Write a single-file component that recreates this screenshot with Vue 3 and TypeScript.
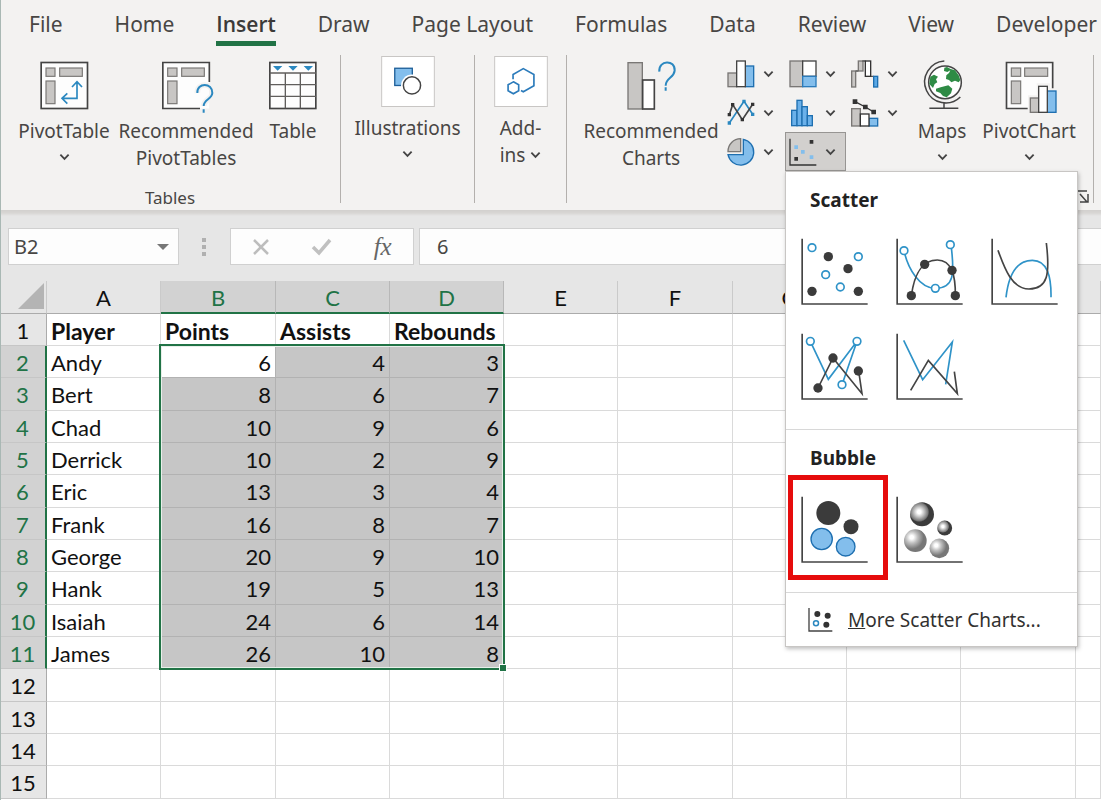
<script setup lang="ts">
import { ref } from 'vue'

interface Player {
  name: string
  points: number
  assists: number
  rebounds: number
}

const tabs = ['File', 'Home', 'Insert', 'Draw', 'Page Layout', 'Formulas', 'Data', 'Review', 'View', 'Developer']
const activeTab = ref('Insert')

const columns = ['A', 'B', 'C', 'D', 'E', 'F', 'G', 'H', 'I', '']
const selectedColumns = ['B', 'C', 'D']
const fields = ['Player', 'Points', 'Assists', 'Rebounds']

const players: Player[] = [
  { name: 'Andy', points: 6, assists: 4, rebounds: 3 },
  { name: 'Bert', points: 8, assists: 6, rebounds: 7 },
  { name: 'Chad', points: 10, assists: 9, rebounds: 6 },
  { name: 'Derrick', points: 10, assists: 2, rebounds: 9 },
  { name: 'Eric', points: 13, assists: 3, rebounds: 4 },
  { name: 'Frank', points: 16, assists: 8, rebounds: 7 },
  { name: 'George', points: 20, assists: 9, rebounds: 10 },
  { name: 'Hank', points: 19, assists: 5, rebounds: 13 },
  { name: 'Isaiah', points: 24, assists: 6, rebounds: 14 },
  { name: 'James', points: 26, assists: 10, rebounds: 8 },
]

const rows: (string | number)[][] = Array.from({ length: 15 }, (_, r) => {
  const p = players[r - 1]
  const filled: (string | number)[] = r === 0 ? fields : p ? [p.name, p.points, p.assists, p.rebounds] : []
  return columns.map((_, c) => filled[c] ?? '')
})

const isSelectedRow = (r: number) => r >= 1 && r <= players.length
const isSelectedCell = (r: number, c: number) => isSelectedRow(r) && c >= 1 && c <= 3

const cellName = ref('B2')
const formula = ref('6')
</script>

<template>
  <div class="excel">
    <nav class="tabs" aria-label="Ribbon tabs">
      <button
        v-for="tab in tabs"
        :key="tab"
        type="button"
        class="tab"
        :class="{ active: tab === activeTab }"
        @click="activeTab = tab"
      >{{ tab }}</button>
    </nav>

    <section class="ribbon" aria-label="Insert">
      <div class="group tables">
        <div class="tools">
          <button type="button" class="tool narrow">
            <svg class="big" viewBox="114 183 156 150">
              <rect x="123.500" y="187.500" width="139" height="138" fill="#fdfdfd" stroke="#444" stroke-width="5" />
              <g fill="#c8c6c4" stroke="#797775" stroke-width="3.500">
                <rect x="138" y="204" width="27" height="25" /><rect x="179" y="204" width="68" height="25" /><rect x="138" y="243" width="27" height="68" />
              </g>
              <path d="M231 246V295H187M216 261L231 245L246 261M202 280L186 295L202 311" fill="none" stroke="#2b88c0" stroke-width="5" />
            </svg>
            <span>PivotTable</span>
            <svg class="chevron" viewBox="0 0 12 8"><path d="M1.500 1.500L6 6L10.500 1.500" /></svg>
          </button>
          <button type="button" class="tool wide">
            <svg class="big" viewBox="480 183 156 150">
              <rect x="488.500" y="187.500" width="139" height="138" fill="#fdfdfd" />
              <path d="M628 246V187.500H488.500V325.500H600" fill="none" stroke="#444" stroke-width="5" />
              <g fill="#c8c6c4" stroke="#797775" stroke-width="3.500">
                <rect x="503" y="204" width="28" height="25" /><rect x="545" y="204" width="68" height="25" /><rect x="503" y="243" width="28" height="68" />
              </g>
              <path d="M592 279C590 247 638 247 637 279C636 298 611 298 611 318M611 327V338" fill="none" stroke="#f3f2f1" stroke-width="17" />
              <path d="M592 279C590 247 638 247 637 279C636 298 611 298 611 318M611 328V338" fill="none" stroke="#2b88c0" stroke-width="6" />
            </svg>
            <span>Recommended<br>PivotTables</span>
          </button>
          <button type="button" class="tool slim">
            <svg class="big" viewBox="801 183 156 150">
              <rect x="809.500" y="187.500" width="138" height="138" fill="#fdfdfd" stroke="#444" stroke-width="5" />
              <path d="M809 219H948M809 254H948M809 289H948M856 219V325M901 219V325" stroke="#605e5c" stroke-width="4" />
              <path d="M819 198H847L833 212ZM865 198H893L879 212ZM911 198H939L925 212Z" fill="#2b88c0" />
            </svg>
            <span>Table</span>
          </button>
        </div>
        <div class="caption">Tables</div>
      </div>
      <div class="divider"></div>

      <div class="group illustrations">
        <button type="button" class="tool boxed">
          <svg class="frame" viewBox="153 168 162 154">
            <rect x="154.500" y="169.500" width="159" height="151" fill="#fff" stroke="#c8c6c4" stroke-width="3" />
            <rect x="194" y="205" width="53" height="52" fill="#83beec" stroke="#1e5f99" stroke-width="4" />
            <circle cx="246" cy="257" r="33" fill="#fff" />
            <circle cx="246" cy="257" r="26" fill="#fff" stroke="#444" stroke-width="4.500" />
          </svg>
          <span>Illustrations</span>
          <svg class="chevron" viewBox="0 0 12 8"><path d="M1.500 1.500L6 6L10.500 1.500" /></svg>
        </button>
      </div>
      <div class="divider"></div>

      <div class="group addins">
        <button type="button" class="tool boxed">
          <svg class="frame" viewBox="491 168 162 154">
            <rect x="492.500" y="169.500" width="159" height="151" fill="#fff" stroke="#c8c6c4" stroke-width="3" />
            <path d="M548 238V224L579 206L611 224V258L579 276L572 272" fill="none" stroke="#2b7bbb" stroke-width="5" />
            <path d="M549 246L565 255V273L549 282L533 273V255Z" fill="none" stroke="#2b7bbb" stroke-width="5" />
          </svg>
          <span>Add-<br>ins <svg class="chevron inline" viewBox="0 0 12 8"><path d="M1.500 1.500L6 6L10.500 1.500" /></svg></span>
        </button>
      </div>
      <div class="divider"></div>

      <div class="group charts">
        <div class="tools">
          <button type="button" class="tool wide">
            <svg class="big" viewBox="165 63 156 150">
              <rect x="174" y="68" width="43" height="139" fill="#c8c6c4" stroke="#797775" stroke-width="4" />
              <rect x="218" y="120" width="35" height="87" fill="#fff" stroke="#444" stroke-width="5" />
              <path d="M268 95C265 59 316 58 314 92C312 114 287 114 287 137M287 142V152" fill="none" stroke="#2b88c0" stroke-width="6" />
            </svg>
            <span>Recommended<br>Charts</span>
          </button>

          <div class="chart-kinds">
            <button type="button" class="kind" aria-label="Column chart">
              <svg class="small" viewBox="473 55 84 84">
                <g stroke-width="4">
                  <rect x="476" y="94" width="26" height="41" fill="#c8c6c4" stroke="#797775" />
                  <rect x="528" y="73" width="25" height="62" fill="#83beec" stroke="#1e6fb0" />
                  <rect x="502" y="58" width="26" height="77" fill="#fff" stroke="#444" />
                </g>
              </svg>
              <svg class="chevron" viewBox="0 0 12 8"><path d="M1.500 1.500L6 6L10.500 1.500" /></svg>
            </button>
            <button type="button" class="kind" aria-label="Hierarchy chart">
              <svg class="small" viewBox="658 55 84 84">
                <g stroke-width="4">
                  <rect x="661" y="58" width="38" height="77" fill="#c8c6c4" stroke="#797775" />
                  <rect x="699" y="58" width="40" height="46" fill="#fff" stroke="#444" />
                  <rect x="699" y="104" width="40" height="31" fill="#83beec" stroke="#2b7bbb" />
                </g>
              </svg>
              <svg class="chevron" viewBox="0 0 12 8"><path d="M1.500 1.500L6 6L10.500 1.500" /></svg>
            </button>
            <button type="button" class="kind" aria-label="Waterfall chart">
              <svg class="small" viewBox="34 175 84 84">
                <g stroke-width="4">
                  <rect x="36" y="208" width="12" height="48" fill="#c8c6c4" stroke="#797775" />
                  <rect x="56" y="178" width="14" height="30" fill="#c8c6c4" stroke="#797775" />
                  <path d="M48 208H56M68 178H78M93 224H102" stroke="#555" />
                  <rect x="77" y="178" width="16" height="46" fill="#fff" stroke="#333" />
                  <rect x="102" y="224" width="12" height="32" fill="#5aa9e6" stroke="#1e6fb0" />
                </g>
              </svg>
              <svg class="chevron" viewBox="0 0 12 8"><path d="M1.500 1.500L6 6L10.500 1.500" /></svg>
            </button>
            <button type="button" class="kind" aria-label="Line chart">
              <svg class="small" viewBox="473 172 84 84">
                <path d="M480 244L524 179L550 218" fill="none" stroke="#2b88c0" stroke-width="5" />
                <path d="M480 219L490 189L519 234L550 188" fill="none" stroke="#444" stroke-width="5" />
                <path d="M475 239h10v10h-10zM519 174h10v10h-10zM545 213h10v10h-10z" fill="#2b88c0" />
                <path d="M475 214h10v10h-10zM485 184h10v10h-10zM514 229h10v10h-10zM545 183h10v10h-10z" fill="#333" />
              </svg>
              <svg class="chevron" viewBox="0 0 12 8"><path d="M1.500 1.500L6 6L10.500 1.500" /></svg>
            </button>
            <button type="button" class="kind" aria-label="Statistic chart">
              <svg class="small" viewBox="658 172 84 84">
                <g fill="#6bb1ea" stroke="#1e6fb0" stroke-width="4">
                  <rect x="666" y="206" width="16" height="46" /><rect x="682" y="176" width="15" height="76" /><rect x="697" y="195" width="16" height="57" /><rect x="713" y="222" width="15" height="30" />
                </g>
              </svg>
              <svg class="chevron" viewBox="0 0 12 8"><path d="M1.500 1.500L6 6L10.500 1.500" /></svg>
            </button>
            <button type="button" class="kind" aria-label="Combo chart">
              <svg class="small" viewBox="34 292 84 84">
                <g stroke-width="4">
                  <rect x="36" y="321" width="26" height="52" fill="#c8c6c4" stroke="#797775" />
                  <rect x="88" y="350" width="26" height="23" fill="#83beec" stroke="#1e6fb0" />
                  <rect x="62" y="337" width="26" height="36" fill="#fff" stroke="#333" />
                </g>
                <path d="M46 300L77 316L102 331" fill="none" stroke="#333" stroke-width="4" />
                <path d="M39 293h14v14h-14zM70 309h14v14h-14zM95 324h14v14h-14z" fill="#333" />
              </svg>
              <svg class="chevron" viewBox="0 0 12 8"><path d="M1.500 1.500L6 6L10.500 1.500" /></svg>
            </button>
            <button type="button" class="kind" aria-label="Pie chart">
              <svg class="small" viewBox="473 289 84 84">
                <path d="M522 293A39 39 0 1 1 476 339H522Z" fill="#83beec" stroke="#1e6fb0" stroke-width="4" />
                <path d="M514 291V330H476A38 38 0 0 1 514 291Z" fill="#c8c6c4" stroke="#797775" stroke-width="4" />
              </svg>
              <svg class="chevron" viewBox="0 0 12 8"><path d="M1.500 1.500L6 6L10.500 1.500" /></svg>
            </button>

            <div class="scatter">
              <button type="button" class="kind open" aria-label="Scatter or bubble chart" aria-expanded="true">
                <svg class="small" viewBox="658 289 84 84">
                  <path d="M661 291V370H740" fill="none" stroke="#333" stroke-width="4" />
                  <path d="M720 295h11v11h-11zM674 346h11v11h-11z" fill="#333" />
                  <path d="M674 311h11v11h-11zM694 325h11v11h-11zM720 341h11v11h-11z" fill="#83beec" />
                </svg>
                <svg class="chevron" viewBox="0 0 12 8"><path d="M1.500 1.500L6 6L10.500 1.500" /></svg>
              </button>

              <div class="menu">
                <section class="menu-part">
                  <h2>Scatter</h2>
                  <div class="gallery">
                    <button type="button" class="choice" aria-label="Scatter">
                      <svg viewBox="64 203 204 204">
                        <path class="axis" d="M67.500 205V401H264" />
                        <g class="ring"><circle cx="97" cy="232" r="11.500" /><circle cx="236" cy="259" r="11.500" /><circle cx="138" cy="313" r="11.500" /><circle cx="182" cy="350" r="11.500" /></g>
                        <g class="dot"><circle cx="146" cy="259" r="14" /><circle cx="205" cy="295" r="14" /><circle cx="97" cy="363" r="14" /><circle cx="236" cy="363" r="14" /></g>
                      </svg>
                    </button>
                    <button type="button" class="choice" aria-label="Scatter with smooth lines and markers">
                      <svg viewBox="348 203 204 204">
                        <path class="axis" d="M351.500 205V401H548" />
                        <path class="blue" d="M372 241C384 297 420 354 466 354C523 354 524 310 513 223" />
                        <path class="dark" d="M394 376C402 320 420 269 472 269C516 269 527 318 526 376" />
                        <g class="ring"><circle cx="372" cy="241" r="11.500" /><circle cx="511" cy="223" r="11.500" /><circle cx="466" cy="354" r="11.500" /></g>
                        <g class="dot"><circle cx="434" cy="282" r="14" /><circle cx="516" cy="300" r="14" /><circle cx="394" cy="376" r="14" /><circle cx="526" cy="376" r="14" /></g>
                      </svg>
                    </button>
                    <button type="button" class="choice" aria-label="Scatter with smooth lines">
                      <svg viewBox="632 203 204 204">
                        <path class="axis" d="M635.500 205V401H832" />
                        <path class="blue" d="M677 381C684 320 706 270 756 270C802 270 813 320 812 381" />
                        <path class="dark" d="M653 240C672 292 694 356 746 356C803 356 809 310 798 218" />
                      </svg>
                    </button>
                    <button type="button" class="choice" aria-label="Scatter with straight lines and markers">
                      <svg viewBox="64 487 204 204">
                        <path class="axis" d="M67.500 489V685H264" />
                        <path class="blue" d="M92 512L146 626L232 512L187 642" />
                        <path class="dark" d="M115 652L160 562L247 669L237 601" />
                        <g class="ring"><circle cx="92" cy="512" r="11.500" /><circle cx="232" cy="512" r="11.500" /><circle cx="187" cy="642" r="11.500" /></g>
                        <g class="dot"><circle cx="115" cy="652" r="14" /><circle cx="160" cy="562" r="14" /><circle cx="236" cy="601" r="14" /></g>
                      </svg>
                    </button>
                    <button type="button" class="choice" aria-label="Scatter with straight lines">
                      <svg viewBox="348 487 204 204">
                        <path class="axis" d="M351.500 489V685H548" />
                        <path class="blue" d="M371 509L428 627L517 514L497 641" />
                        <path class="dark" d="M392 659L445 569L532 669L523 603" />
                      </svg>
                    </button>
                  </div>
                </section>
                <section class="menu-part">
                  <h2>Bubble</h2>
                  <div class="gallery">
                    <button type="button" class="choice marked" aria-label="Bubble">
                      <svg viewBox="64 227 204 204">
                        <path class="axis" d="M67.500 229V425H264" />
                        <circle cx="146" cy="278" r="36" fill="#3b3b3b" /><circle cx="214" cy="319" r="22.500" fill="#3b3b3b" />
                        <g fill="#83beec" stroke="#1e6fb0" stroke-width="4"><circle cx="126" cy="356" r="32" /><circle cx="198" cy="379" r="28" /></g>
                      </svg>
                    </button>
                    <button type="button" class="choice" aria-label="3-D Bubble">
                      <svg viewBox="348 227 204 204">
                        <defs>
                          <radialGradient id="ball-dark" cx="0.380" cy="0.400" r="0.620">
                            <stop offset="0.120" stop-color="#fff" /><stop offset="0.350" stop-color="#c0c0c0" /><stop offset="0.600" stop-color="#777" /><stop offset="0.680" stop-color="#3b3b3b" />
                          </radialGradient>
                          <radialGradient id="ball-light" cx="0.340" cy="0.350" r="0.650">
                            <stop offset="0.120" stop-color="#fff" /><stop offset="0.400" stop-color="#c0c0c0" /><stop offset="0.800" stop-color="#777" />
                          </radialGradient>
                        </defs>
                        <path class="axis" d="M351.500 229V425H548" />
                        <circle cx="426" cy="282" r="36" fill="url(#ball-dark)" /><circle cx="494" cy="323" r="22.500" fill="url(#ball-dark)" />
                        <circle cx="406" cy="361" r="34" fill="url(#ball-light)" /><circle cx="478" cy="384" r="29.500" fill="url(#ball-light)" />
                      </svg>
                    </button>
                  </div>
                </section>
                <button type="button" class="more">
                  <svg viewBox="85 558 75 72">
                    <path d="M88 558V627H158" fill="none" stroke="#444" stroke-width="4" />
                    <g fill="#333"><circle cx="113" cy="576" r="9" /><circle cx="144" cy="581" r="9" /><circle cx="140" cy="608" r="9" /></g>
                    <circle cx="109" cy="604" r="7.500" fill="#fff" stroke="#2b88c0" stroke-width="4.500" />
                  </svg>
                  <span><u>M</u>ore Scatter Charts...</span>
                </button>
              </div>
            </div>
          </div>

          <button type="button" class="tool maps">
            <svg class="big" viewBox="228 183 156 150">
              <circle cx="315" cy="247" r="49" fill="#fff" stroke="#444" stroke-width="4.500" />
              <path d="M313 183A63 63 0 1 0 361 291M312 310V325M268 325H355" fill="none" stroke="#444" stroke-width="4.500" />
              <path d="M313 203L321 201L332 207L345 211L356 226L361 240L356 247L345 242L334 247L327 240L318 237L319 226L327 219L331 211L322 216L312 213ZM271 230L282 224L294 230L288 238L292 247L284 252L279 264L268 252ZM302 262L325 256L337 266L333 280L320 292L309 288L301 279L288 274V266Z" fill="#2e8b45" />
            </svg>
            <span>Maps</span>
            <svg class="chevron" viewBox="0 0 12 8"><path d="M1.500 1.500L6 6L10.500 1.500" /></svg>
          </button>
          <button type="button" class="tool pivot-chart">
            <svg class="big" viewBox="489 183 156 150">
              <path d="M563 325.500H499.500V187.500H638V325" fill="#fdfdfd" stroke="#444" stroke-width="5" />
              <g fill="#c8c6c4" stroke="#797775" stroke-width="3.500">
                <rect x="514" y="204" width="28" height="25" /><rect x="554" y="204" width="69" height="25" /><rect x="514" y="243" width="28" height="68" />
              </g>
              <path d="M564 286H590V250H630V265H657V342H564Z" fill="#f3f2f1" />
              <g stroke-width="4">
                <rect x="571" y="294" width="25" height="43" fill="#c8c6c4" stroke="#797775" />
                <rect x="622" y="273" width="26" height="64" fill="#83beec" stroke="#1e6fb0" />
                <rect x="596" y="259" width="26" height="78" fill="#fff" stroke="#444" />
              </g>
            </svg>
            <span>PivotChart</span>
            <svg class="chevron" viewBox="0 0 12 8"><path d="M1.500 1.500L6 6L10.500 1.500" /></svg>
          </button>
        </div>
        <button type="button" class="launcher" aria-label="Charts dialog">
          <svg viewBox="0 0 12 14"><path d="M0 1H9M2 4L9 12M10 4V12H2" fill="none" stroke="#444" stroke-width="1.500" /></svg>
        </button>
      </div>
      <div class="divider"></div>
    </section>

    <section class="formula-bar">
      <div class="name-box">
        <input v-model="cellName" aria-label="Name box">
        <button type="button" aria-label="Named ranges">
          <svg viewBox="0 0 12 6"><path d="M0 0H12L6 6Z" fill="#777" /></svg>
        </button>
      </div>
      <svg class="grip" viewBox="0 0 6 20"><path d="M1 1h4v4h-4zM1 8h4v4h-4zM1 15h4v4h-4z" fill="#b0b0b0" /></svg>
      <div class="entry">
        <button type="button" aria-label="Cancel"><svg viewBox="0 0 20 18"><path d="M3 2L17 16M17 2L3 16" fill="none" stroke="#bdbdbd" stroke-width="2.500" /></svg></button>
        <button type="button" aria-label="Enter"><svg viewBox="0 0 20 18"><path d="M1 9L7 15L18 2" fill="none" stroke="#c0c0c0" stroke-width="3.500" /></svg></button>
        <button type="button" class="fx" aria-label="Insert function">fx</button>
      </div>
      <input v-model="formula" class="formula" aria-label="Formula">
    </section>

    <main class="sheet">
      <table>
        <colgroup>
          <col class="corner-col">
          <col v-for="(c, i) in columns" :key="i" :class="{ roomy: c === 'B' || c === 'F' || c === 'I', rest: c === '' }">
        </colgroup>
        <thead>
          <tr>
            <th class="corner"><svg viewBox="0 0 26 26"><path d="M26 0V26H0Z" fill="#b4b4b4" /></svg></th>
            <th v-for="(c, i) in columns" :key="i" scope="col" :class="{ selected: selectedColumns.includes(c) }">{{ c }}</th>
          </tr>
        </thead>
        <tbody>
          <tr v-for="(row, r) in rows" :key="r">
            <th scope="row" :class="{ selected: isSelectedRow(r) }">{{ r + 1 }}</th>
            <td
              v-for="(value, c) in row"
              :key="c"
              :class="{ field: r === 0, number: typeof value === 'number', selected: isSelectedCell(r, c), current: r === 1 && c === 1 }"
            >{{ value }}</td>
          </tr>
        </tbody>
      </table>
      <div class="selection"></div>
    </main>
  </div>
</template>

<style>
body {
  margin: 0;
  background: #fff;
}
</style>

<style scoped>
.excel {
  position: relative;
  height: 100vh;
  overflow: hidden;
  box-sizing: border-box;
  background: #fff;
  color: #484644;
  font-family: "Noto Sans", "Open Sans", sans-serif;
  font-size: 19px;
}
.excel::after {
  content: "";
  position: absolute;
  inset: 0 auto 0 0;
  width: 1px;
  background: #a9b8b4;
}
button {
  padding: 0;
  border: 0;
  background: none;
  color: inherit;
  font: inherit;
}
input {
  border: 0;
  outline: 0;
  background: none;
  color: inherit;
  font: inherit;
  min-width: 0;
}
svg {
  display: block;
  overflow: visible;
  flex: none;
}
.tabs {
  display: flex;
  justify-content: space-between;
  height: 48px;
  padding: 0 4px 0 29px;
  background: #f3f2f1;
  box-sizing: border-box;
  font-size: 21px;
}
.tab {
  position: relative;
  height: 48px;
  white-space: nowrap;
}
.tab:first-child {
  margin-right: 10px;
}
.tab.active {
  color: #3b3a39;
  font-family: "Open Sans", "Noto Sans", sans-serif;
  font-weight: 600;
}
.tab.active::after {
  content: "";
  position: absolute;
  left: 0;
  right: 0;
  bottom: 2px;
  height: 5px;
  background: #217346;
}
.ribbon {
  display: flex;
  height: 162px;
  background: #f3f2f1;
}
.divider {
  width: 1px;
  margin: 7px 0;
  background: #b3b0ad;
}
.group {
  position: relative;
  display: flex;
  flex-direction: column;
  box-sizing: border-box;
  padding: 7px 0 2px;
}
.tools {
  display: flex;
}
.tables {
  width: 340px;
  padding-left: 14px;
}
.illustrations {
  width: 133px;
}
.addins {
  width: 91px;
}
.charts {
  padding-left: 12px;
  padding-right: 10px;
}
.caption {
  margin: auto 14px 0 0;
  font-size: 17px;
  line-height: 20px;
  text-align: center;
}
.tool {
  display: flex;
  flex-direction: column;
  align-items: center;
  padding-top: 6px;
  line-height: 27px;
  white-space: nowrap;
}
.tool > span {
  margin-top: 7px;
}
.narrow {
  width: 100px;
}
.wide {
  width: 144px;
}
.slim {
  width: 70px;
}
.maps {
  width: 66px;
}
.pivot-chart {
  width: 108px;
}
.boxed {
  padding-top: 1px;
}
.boxed > span {
  margin-top: 8px;
}
.big {
  width: 52px;
  height: 50px;
}
.frame {
  width: 54px;
  height: 51px;
}
.small {
  width: 28px;
  height: 28px;
}
.chevron {
  width: 11px;
  height: 8px;
  fill: none;
  stroke: #444;
  stroke-width: 2;
}
.tool > .chevron {
  margin-top: 8px;
}
.chevron.inline {
  display: inline-block;
  vertical-align: 3px;
}
.chart-kinds {
  display: grid;
  grid-template-columns: repeat(3, 62px);
  grid-auto-rows: 39px;
  margin-top: -1px;
}
.kind {
  display: flex;
  align-items: center;
  gap: 8px;
  width: 61px;
  height: 39px;
  padding-left: 4px;
  box-sizing: border-box;
}
.kind.open {
  padding-left: 3px;
  background: #d2d0ce;
  border: 1px solid #979593;
}
.scatter {
  position: relative;
}
.menu {
  position: absolute;
  z-index: 5;
  top: 39px;
  left: 0;
  width: 293px;
  box-sizing: border-box;
  border: 1px solid #c8c6c4;
  background: #fff;
  box-shadow: 1px 2px 4px rgba(0, 0, 0, 0.25);
  color: #323130;
}
.menu-part {
  padding: 14px 2px 15px;
  border-bottom: 1px solid #d8d8d8;
}
.menu h2 {
  margin: 0 0 10px 22px;
  color: #222;
  font-size: 19px;
  font-weight: 700;
  line-height: 28px;
}
.gallery {
  display: grid;
  grid-template-columns: repeat(3, 95px);
  grid-auto-rows: 95px;
}
.choice {
  position: relative;
  padding: 0 13px;
}
.choice svg {
  width: 68px;
  height: 68px;
}
.marked::after {
  content: "";
  position: absolute;
  inset: -7px -5px -3px 0;
  border: 5px solid #e60c0c;
}
.axis,
.blue,
.dark {
  fill: none;
  stroke: #444;
  stroke-width: 5;
}
.blue {
  stroke: #2f93c8;
}
.dot {
  fill: #3b3b3b;
}
.ring {
  fill: #fff;
  stroke: #2f93c8;
  stroke-width: 5;
}
.more {
  display: flex;
  align-items: center;
  gap: 15px;
  width: 100%;
  height: 53px;
  padding-left: 22px;
}
.more svg {
  width: 25px;
  height: 24px;
}
.launcher {
  position: absolute;
  right: 3px;
  bottom: 6px;
}
.launcher svg {
  width: 12px;
  height: 14px;
}
.formula-bar {
  display: flex;
  align-items: flex-start;
  height: 71px;
  padding: 18px 0 0 8px;
  box-sizing: border-box;
  background: linear-gradient(#d2d0ce, #d8d6d4 3px, #e6e6e6 6px);
  font-size: 20px;
}
.name-box,
.entry,
.formula {
  display: flex;
  align-items: center;
  height: 37px;
  box-sizing: border-box;
  border: 1px solid #d0d0d0;
  background: #fdfdfd;
}
.name-box {
  width: 171px;
  padding: 0 9px 0 5px;
}
.name-box input {
  flex: 1;
  padding: 0;
}
.name-box svg {
  width: 12px;
  height: 6px;
}
.grip {
  width: 6px;
  height: 20px;
  margin: 9px 23px 0 22px;
}
.entry {
  width: 184px;
  margin-right: 5px;
}
.entry button {
  flex: 1;
  display: flex;
  justify-content: center;
}
.entry svg {
  width: 20px;
  height: 18px;
}
.entry .fx {
  color: #666;
  font-family: "Liberation Serif", serif;
  font-size: 25px;
  font-style: italic;
  line-height: 28px;
}
.formula {
  flex: 1;
  padding: 0 17px;
  border-right: 0;
}
.sheet {
  position: relative;
}
table {
  width: 100%;
  table-layout: fixed;
  border-collapse: separate;
  border-spacing: 0;
  color: #111;
  font-family: Lato, "Noto Sans", sans-serif;
  font-size: 22px;
  line-height: 28px;
}
col {
  width: 114px;
}
.corner-col {
  width: 47px;
}
.roomy {
  width: 115px;
}
.rest {
  width: auto;
}
th,
td {
  height: 32px;
  padding: 2px 4px 0;
  box-sizing: border-box;
  border-right: 1px solid #dadada;
  border-bottom: 1px solid #dadada;
  overflow: hidden;
  white-space: nowrap;
}
tbody tr:nth-child(3n) > * {
  height: 33px;
}
th {
  padding: 2px 0 0;
  background: #e6e6e6;
  font-weight: 400;
  text-align: center;
}
thead th {
  height: 33px;
  border-right-color: #cacaca;
  border-bottom-color: #ababab;
}
thead .corner {
  padding: 0 2px 2px 0;
}
.corner svg {
  width: 26px;
  height: 26px;
  margin-left: auto;
}
tbody th {
  border-right-color: #ababab;
  border-bottom-color: #c6c6c6;
}
th.selected {
  background: #d2d2d2;
  color: #217346;
}
thead th.selected {
  border-right-color: #b8b8b8;
  border-bottom: 2px solid #217346;
}
tbody th.selected {
  border-right: 2px solid #217346;
}
td.field {
  font-size: 23px;
  font-weight: 700;
}
td.number {
  text-align: right;
}
td.selected {
  background: #c6c6c6;
  border-color: #b2b2b2;
}
td.current {
  background: #fff;
}
.selection {
  position: absolute;
  top: 63px;
  left: 159px;
  width: 346px;
  height: 326px;
  box-sizing: border-box;
  border: 2px solid #217346;
  box-shadow: inset 0 0 0 1px #e8f0ea;
}
.selection::after {
  content: "";
  position: absolute;
  right: -4px;
  bottom: -4px;
  width: 6px;
  height: 6px;
  border: 1px solid #fff;
  background: #217346;
}
</style>
